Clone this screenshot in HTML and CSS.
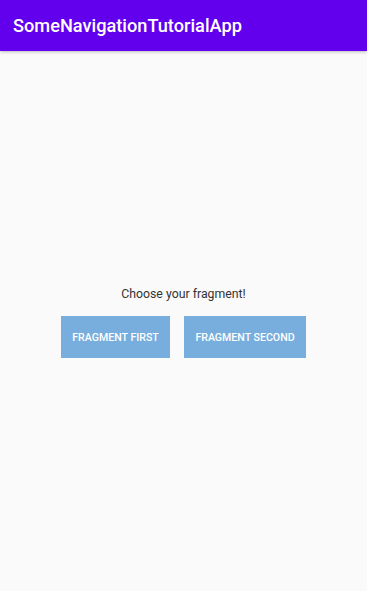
FILE: index.html
```html
<!DOCTYPE html>
<html>
<head>
<meta charset="utf-8">
<link rel="stylesheet" href="styles.css">
</head>
<body>
<div class="app">
  <header class="appbar"><span class="title">SomeNavigationTutorialApp</span></header>
  <main class="content">
    <div class="center">
      <p class="prompt">Choose your fragment!</p>
      <div class="buttons">
        <button class="btn btn-first">FRAGMENT FIRST</button>
        <button class="btn btn-second">FRAGMENT SECOND</button>
      </div>
    </div>
  </main>
</div>
</body>
</html>
```
FILE: styles.css
```css
html, body { margin: 0; padding: 0; }
body { background: #fafafa; font-family: Roboto, "Noto Sans", sans-serif; }
.app { width: 367px; height: 591px; display: flex; flex-direction: column; }
.appbar {
  height: 51px; background: #6200ee; display: flex; align-items: center;
  padding-left: 13px; box-shadow: 0 1px 3px rgba(0,0,0,0.25); position: relative; z-index: 1;
}
.title { color: #fff; font-size: 18.2px; font-weight: 500; }
.content { flex: 1; display: flex; justify-content: center; }
.center { padding-top: 234px; display: flex; flex-direction: column; align-items: center; }
.prompt { margin: 0; font-size: 12.3px; color: #333; line-height: 18px; }
.buttons { margin-top: 13px; display: flex; gap: 14px; }
.btn {
  border: none; background: #77aedd; color: #fff; font-family: Roboto, sans-serif;
  font-size: 10.6px; font-weight: 500; height: 42px; padding: 0; margin: 0;
}
.btn-first { width: 109px; }
.btn-second { width: 122px; }
```
